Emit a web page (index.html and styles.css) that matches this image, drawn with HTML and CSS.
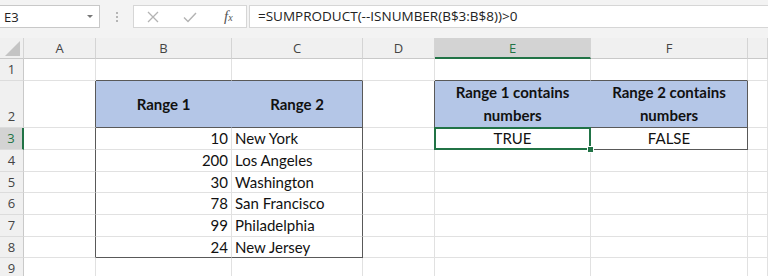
FILE: index.html
```html
<html>
  <head>
    <link rel="stylesheet" href="styles.css">
  </head>
  <body>

  <div class="formulabar">
    <div class="namebox">
      <span>E3</span>
      <span class="caret"></span>
    </div>
    <div class="grip"><i></i><i></i><i></i></div>
    <div class="fxbox">
      <svg class="ico" width="14" height="14" viewBox="0 0 14 14"><path d="M2 2 L12 12 M12 2 L2 12" stroke="#b3b3b3" stroke-width="1.3" fill="none"/></svg>
      <svg class="ico" width="16" height="14" viewBox="0 0 16 14"><path d="M2 7.5 L6 11.5 L14 3" stroke="#b3b3b3" stroke-width="1.4" fill="none"/></svg>
      <span class="fx">f<sub>x</sub></span>
    </div>
    <div class="formula">=SUMPRODUCT(--ISNUMBER(B$3:B$8))&gt;0</div>
  </div>

  <div class="sheet">
    <!-- column headers -->
    <div class="ch corner"><span class="tri"></span></div>
    <div class="ch">A</div>
    <div class="ch">B</div>
    <div class="ch">C</div>
    <div class="ch">D</div>
    <div class="ch active">E</div>
    <div class="ch">F</div>
    <div class="ch"></div>

    <!-- row 1 -->
    <div class="rh">1</div>
    <div class="c"></div>
    <div class="c db"></div>
    <div class="c db"></div>
    <div class="c"></div>
    <div class="c db"></div>
    <div class="c db"></div>
    <div class="c"></div>

    <!-- row 2 -->
    <div class="rh low">2</div>
    <div class="c dr"></div>
    <div class="c hd db fr center">Range 1</div>
    <div class="c hd db dr center">Range 2</div>
    <div class="c dr"></div>
    <div class="c hd db fr center wrap">Range 1 contains numbers</div>
    <div class="c hd db dr center wrap">Range 2 contains numbers</div>
    <div class="c"></div>

    <!-- row 3 -->
    <div class="rh active">3</div>
    <div class="c dr"></div>
    <div class="c num">10</div>
    <div class="c dr">New York</div>
    <div class="c dr"></div>
    <div class="c db dr center sel">TRUE<span class="handle"></span></div>
    <div class="c db dr center">FALSE</div>
    <div class="c"></div>

    <!-- row 4 -->
    <div class="rh">4</div>
    <div class="c dr"></div>
    <div class="c num">200</div>
    <div class="c dr">Los Angeles</div>
    <div class="c"></div>
    <div class="c"></div>
    <div class="c"></div>
    <div class="c"></div>

    <!-- row 5 -->
    <div class="rh">5</div>
    <div class="c dr"></div>
    <div class="c num">30</div>
    <div class="c dr">Washington</div>
    <div class="c"></div>
    <div class="c"></div>
    <div class="c"></div>
    <div class="c"></div>

    <!-- row 6 -->
    <div class="rh">6</div>
    <div class="c dr"></div>
    <div class="c num">78</div>
    <div class="c dr">San Francisco</div>
    <div class="c"></div>
    <div class="c"></div>
    <div class="c"></div>
    <div class="c"></div>

    <!-- row 7 -->
    <div class="rh">7</div>
    <div class="c dr"></div>
    <div class="c num">99</div>
    <div class="c dr">Philadelphia</div>
    <div class="c"></div>
    <div class="c"></div>
    <div class="c"></div>
    <div class="c"></div>

    <!-- row 8 -->
    <div class="rh">8</div>
    <div class="c dr"></div>
    <div class="c num db">24</div>
    <div class="c dr db">New Jersey</div>
    <div class="c"></div>
    <div class="c"></div>
    <div class="c"></div>
    <div class="c"></div>

    <!-- row 9 -->
    <div class="rh">9</div>
    <div class="c"></div>
    <div class="c"></div>
    <div class="c"></div>
    <div class="c"></div>
    <div class="c"></div>
    <div class="c"></div>
    <div class="c"></div>
  </div>

  </body>
</html>
```

FILE: styles.css
```css
  body {
    margin: 0;
    background-color: #f3f3f3;
    font-family: Lato, "Liberation Sans", sans-serif;
    overflow: hidden;
  }

  .formulabar {
    height: 38px;
    display: flex;
    align-items: flex-start;
    padding-top: 5px;
    box-sizing: border-box;
    font-family: "Open Sans", sans-serif;
  }

  .namebox {
    width: 100px;
    height: 23px;
    box-sizing: border-box;
    background-color: white;
    border: 1px solid #c8c8c8;
    border-left: none;
    display: flex;
    align-items: center;
    justify-content: space-between;
    padding: 0 6px 0 4px;
    font-size: 13px;
    color: #222;
  }

  .caret {
    width: 0;
    height: 0;
    border-left: 3px solid transparent;
    border-right: 3px solid transparent;
    border-top: 3px solid #777;
  }

  .grip {
    width: 33px;
    height: 23px;
    display: flex;
    flex-direction: column;
    align-items: center;
    justify-content: center;
    gap: 2px;
  }

  .grip i {
    width: 2px;
    height: 2px;
    background-color: #b5b5b5;
  }

  .fxbox {
    width: 114px;
    height: 23px;
    box-sizing: border-box;
    background-color: white;
    border: 1px solid #d6d6d6;
    display: flex;
    align-items: center;
    padding-left: 12px;
    gap: 22px;
  }

  .fx {
    font-family: "Liberation Serif", serif;
    font-style: italic;
    font-size: 15px;
    color: #555;
    margin-left: 4px;
  }

  .fx sub {
    font-size: 10px;
    vertical-align: 0;
  }

  .formula {
    flex: 1;
    height: 23px;
    margin-left: 2px;
    box-sizing: border-box;
    background-color: white;
    border: 1px solid #d6d6d6;
    border-right: none;
    padding-left: 8px;
    font-size: 13.5px;
    line-height: 21px;
    color: #222;
  }

  .sheet {
    display: grid;
    grid-template-columns: 24px 72px 136px 131px 72px 156px 157px 1fr;
    grid-template-rows: 21px 22px 47px 22px 22px 21px 22px 22px 21px 20px;
    background-color: white;
  }

  .ch {
    background-color: #f0f0f0;
    border-right: 1px solid #d4d4d4;
    border-bottom: 1px solid #c9c9c9;
    box-sizing: border-box;
    text-align: center;
    font-family: "Open Sans", sans-serif;
    font-size: 13px;
    line-height: 20px;
    color: #444;
  }

  .ch.active {
    background-color: #d3d3d3;
    color: #217346;
    border-bottom: 2px solid #217346;
  }

  .corner {
    position: relative;
  }

  .tri {
    position: absolute;
    right: 3px;
    bottom: 2px;
    width: 0;
    height: 0;
    border-left: 15px solid transparent;
    border-bottom: 15px solid #c4c4c4;
  }

  .rh {
    background-color: #f0f0f0;
    border-right: 1px solid #c9c9c9;
    border-bottom: 1px solid #dcdcdc;
    box-sizing: border-box;
    text-align: center;
    font-family: "Open Sans", sans-serif;
    font-size: 13px;
    line-height: 21px;
    color: #444;
  }

  .rh.low {
    display: flex;
    align-items: flex-end;
    justify-content: center;
  }

  .rh.active {
    background-color: #d3d3d3;
    color: #217346;
    border-right: 2px solid #217346;
  }

  .c {
    border-right: 1px solid #e1e1e1;
    border-bottom: 1px solid #e1e1e1;
    box-sizing: border-box;
    font-size: 15px;
    line-height: 21px;
    color: #111;
    padding: 0 3px;
    white-space: nowrap;
  }

  .num {
    text-align: right;
  }

  .center {
    text-align: center;
  }

  .hd {
    background-color: #b4c6e7;
    font-weight: bold;
    display: flex;
    align-items: center;
    justify-content: center;
  }

  .wrap {
    white-space: normal;
    padding: 0 14px;
    line-height: 23px;
  }

  .fr {
    border-right-color: #b4c6e7;
  }

  .dr {
    border-right-color: #595959;
  }

  .db {
    border-bottom-color: #595959;
  }

  .sel {
    position: relative;
  }

  .sel::after {
    content: "";
    position: absolute;
    left: -1px;
    top: -1px;
    right: -1px;
    bottom: -1px;
    border: 2px solid #217346;
  }

  .handle {
    position: absolute;
    right: -4px;
    bottom: -4px;
    width: 5px;
    height: 5px;
    background-color: #217346;
    border: 1px solid white;
    z-index: 2;
  }
```
